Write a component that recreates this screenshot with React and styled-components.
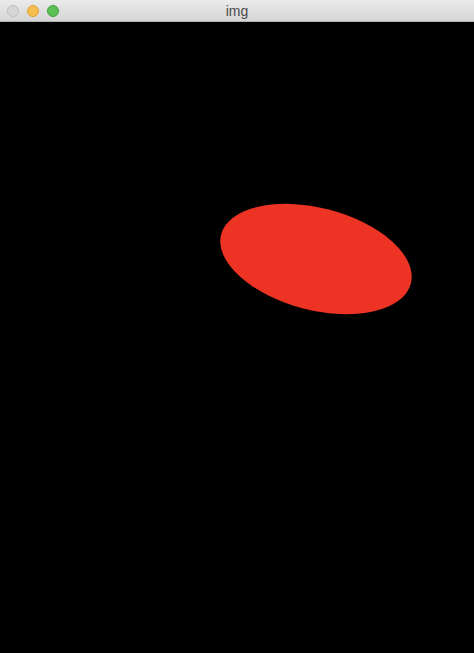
import React from "react";
import styled, { createGlobalStyle } from "styled-components";

const Global = createGlobalStyle`
  html, body, #root {
    margin: 0;
    padding: 0;
    height: 100%;
    background: #000;
  }
  body {
    font-family: "Liberation Sans", "Helvetica Neue", Arial, sans-serif;
  }
`;

const Window = styled.div`
  display: flex;
  flex-direction: column;
  width: 474px;
  height: 653px;
  overflow: hidden;
`;

const TitleBar = styled.div`
  position: relative;
  display: flex;
  align-items: center;
  justify-content: center;
  height: 21px;
  flex-shrink: 0;
  background: linear-gradient(#ebebeb, #d5d5d5);
  border-bottom: 1px solid #b0b0b0;
`;

const Lights = styled.div`
  position: absolute;
  left: 7px;
  top: 5px;
  display: flex;
  gap: 8px;
`;

const Light = styled.span`
  width: 12px;
  height: 12px;
  border-radius: 50%;
  box-sizing: border-box;
  background: ${(p) => p.$color};
  border: 1px solid ${(p) => p.$edge};
`;

const Title = styled.span`
  font-family: "Helvetica Neue", "Liberation Sans", Arial, sans-serif;
  font-size: 14px;
  color: #4a4a4a;
  line-height: 1;
  padding-top: 1px;
`;

const Canvas = styled.div`
  flex: 1;
  background: #000;
  svg {
    display: block;
  }
`;

export default function App() {
  return (
    <>
      <Global />
      <Window>
        <TitleBar>
          <Lights>
            <Light $color="#d6d6d6" $edge="#bdbdbd" />
            <Light $color="#f6be4f" $edge="#dea236" />
            <Light $color="#5bc157" $edge="#42a03e" />
          </Lights>
          <Title>img</Title>
        </TitleBar>
        <Canvas>
          <svg width="474" height="631" viewBox="0 0 474 631">
            <ellipse
              cx="316"
              cy="237"
              rx="98"
              ry="51"
              fill="#ec3324"
              transform="rotate(14.5 316 237)"
            />
          </svg>
        </Canvas>
      </Window>
    </>
  );
}
